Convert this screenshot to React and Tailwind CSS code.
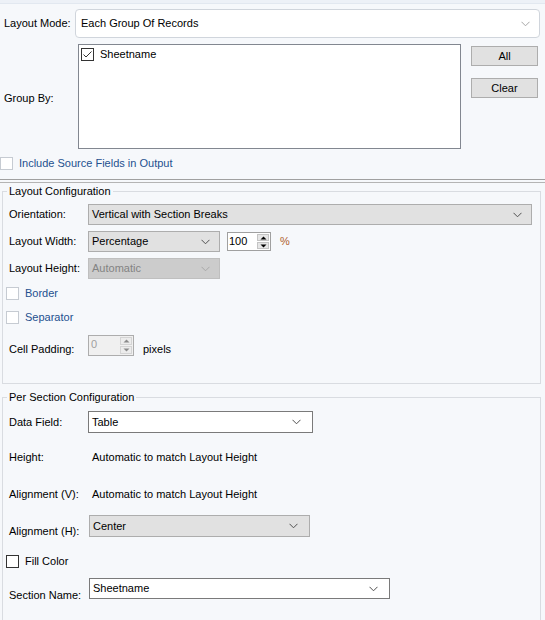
import React from "react";

const FONT = { fontFamily: '"Liberation Sans", Arial, sans-serif' };

function Chevron({ color = "#606060" }) {
  return (
    <svg width="9" height="6" viewBox="0 0 9 6" className="shrink-0">
      <path d="M0.5 0.8 L4.5 4.8 L8.5 0.8" fill="none" stroke={color} strokeWidth="1" />
    </svg>
  );
}

function Combo({ text, w, variant = "gray", h = "h-[21px]", chevronRight = "pr-[9px]" }) {
  const styles = {
    gray: "bg-[#e1e1e1] border-[#adadad] text-black",
    white: "bg-white border-[#7a7a7a] text-black",
    disabled: "bg-[#cccccc] border-[#bfbfbf] text-[#838383]",
  };
  const chev = variant === "disabled" ? "#a8a8a8" : "#505050";
  return (
    <div className={`${w} ${h} ${styles[variant]} border flex items-center justify-between pl-[3px] ${chevronRight}`}>
      <span className="leading-[13px]">{text}</span>
      <Chevron color={chev} />
    </div>
  );
}

function Check({ checked = false, light = false }) {
  return (
    <div
      className={`w-[13px] h-[13px] shrink-0 bg-white border flex items-center justify-center ${
        light ? "border-[#c6cbd2]" : "border-[#333333]"
      }`}
    >
      {checked && (
        <svg width="11" height="11" viewBox="0 0 11 11">
          <path d="M1.5 5.5 L4 8 L9.5 2.5" fill="none" stroke="#333333" strokeWidth="1" />
        </svg>
      )}
    </div>
  );
}

function SpinArrows({ color = "#000000", disabled = false }) {
  const btn = disabled ? "bg-[#ececec] border-[#d4d4d4]" : "bg-[#e6e6e6] border-[#c4c4c4]";
  return (
    <div className="w-[13px] h-full flex flex-col gap-[1px] shrink-0 py-[1px] pr-[1px]">
      <div className={`flex-1 flex items-center justify-center border ${btn}`}>
        <svg width="7" height="4" viewBox="0 0 7 4">
          <path d="M0.5 3.5 L3.5 0.5 L6.5 3.5 Z" fill={color} />
        </svg>
      </div>
      <div className={`flex-1 flex items-center justify-center border ${btn}`}>
        <svg width="7" height="4" viewBox="0 0 7 4">
          <path d="M0.5 0.5 L3.5 3.5 L6.5 0.5 Z" fill={color} />
        </svg>
      </div>
    </div>
  );
}

function Label({ children, w }) {
  return <div className={`${w} shrink-0 leading-[13px]`}>{children}</div>;
}

export default function App() {
  return (
    <div
      className="w-[545px] h-[620px] overflow-hidden bg-[#f6f8fb] text-[11px] text-black leading-[13px]"
      style={FONT}
    >
      <div className="h-[4px] bg-[#edf1f7] border-b border-[#e2e8f0]" />

      {/* Layout Mode */}
      <div className="flex items-center h-[29px] mt-[5px]">
        <div className="w-[75px] pl-[4px] shrink-0">Layout Mode:</div>
        <div className="w-[465px] h-full bg-white border border-[#d0d5dc] rounded-[4px] flex items-center justify-between pl-[5px] pr-[9px]">
          <span>Each Group Of Records</span>
          <Chevron color="#a6a6a6" />
        </div>
      </div>

      {/* Group By */}
      <div className="flex mt-[6px]">
        <div className="w-[78px] shrink-0 pl-[4px] flex items-center pt-[3px]">Group By:</div>
        <div className="w-[383px] h-[105px] bg-white border border-[#828790] pl-[2px] pt-[3px]">
          <div className="flex items-center">
            <Check checked />
            <span className="ml-[6px]">Sheetname</span>
          </div>
        </div>
        <div className="ml-[10px] pt-[2px] flex flex-col gap-[12px]">
          <button className="w-[67px] h-[20px] bg-[#e1e1e1] border border-[#adadad] flex items-center justify-center">
            All
          </button>
          <button className="w-[67px] h-[20px] bg-[#e1e1e1] border border-[#adadad] flex items-center justify-center">
            Clear
          </button>
        </div>
      </div>

      {/* Include Source Fields */}
      <div className="flex items-center mt-[8px] h-[13px]">
        <Check light />
        <span className="ml-[6px] text-[#24508f]">Include Source Fields in Output</span>
      </div>

      {/* double separator */}
      <div className="mt-[9px] h-[4px] border-t border-b border-t-[#a0a0a0] border-b-[#b4b4b4]" />

      {/* Layout Configuration */}
      <fieldset className="ml-[2px] w-[539px] mt-[2px] border border-[#d9dce1] pl-[3px] pb-[27px]">
        <legend className="ml-[1px] px-[2px] leading-[13px]">Layout Configuration</legend>

        <div className="flex items-center mt-[6px] pl-[3px]">
          <Label w="w-[79px]">Orientation:</Label>
          <Combo text="Vertical with Section Breaks" w="w-[444px]" h="h-[21px]" />
        </div>

        <div className="flex items-center mt-[6px] pl-[3px]">
          <Label w="w-[79px]">Layout Width:</Label>
          <Combo text="Percentage" w="w-[132px]" h="h-[21px]" />
          <div className="ml-[7px] w-[44px] h-[19px] bg-white border border-[#a0a0a0] flex items-center">
            <span className="flex-1 pl-[1px]">100</span>
            <SpinArrows />
          </div>
          <span className="ml-[9px] text-[#b0602c]">%</span>
        </div>

        <div className="flex items-center mt-[6px] pl-[3px]">
          <Label w="w-[79px]">Layout Height:</Label>
          <Combo text="Automatic" w="w-[132px]" h="h-[21px]" variant="disabled" />
        </div>

        <div className="flex items-center mt-[8px] h-[13px]">
          <Check light />
          <span className="ml-[6px] text-[#24508f]">Border</span>
        </div>

        <div className="flex items-center mt-[11px] h-[13px]">
          <Check light />
          <span className="ml-[6px] text-[#24508f]">Separator</span>
        </div>

        <div className="flex items-end mt-[11px] pl-[3px]">
          <Label w="w-[79px]">Cell Padding:</Label>
          <div className="w-[46px] h-[21px] bg-[#f0f0f0] border border-[#adadad] flex items-stretch">
            <span className="flex-1 pl-[2px] pt-[2px] text-[#a0a0a0]">0</span>
            <SpinArrows color="#8a8a8a" disabled />
          </div>
          <span className="ml-[9px]">pixels</span>
        </div>
      </fieldset>

      {/* Per Section Configuration */}
      <fieldset className="ml-[2px] w-[539px] mt-[7px] border border-[#d9dce1] pl-[3px] pb-[40px]">
        <legend className="ml-[1px] px-[2px] leading-[13px]">Per Section Configuration</legend>

        <div className="flex items-center mt-[7px] pl-[3px]">
          <Label w="w-[79px]">Data Field:</Label>
          <Combo text="Table" w="w-[225px]" h="h-[22px]" variant="white" chevronRight="pr-[11px]" />
        </div>

        <div className="flex items-center mt-[13px] h-[22px] pl-[3px]">
          <Label w="w-[83px]">Height:</Label>
          <span>Automatic to match Layout Height</span>
        </div>

        <div className="flex items-center mt-[15px] h-[22px] pl-[3px]">
          <Label w="w-[83px]">Alignment (V):</Label>
          <span>Automatic to match Layout Height</span>
        </div>

        <div className="flex items-end mt-[10px] pl-[3px]">
          <div className="w-[80px] shrink-0 leading-[13px] mb-[-1px]">Alignment (H):</div>
          <Combo text="Center" w="w-[221px]" h="h-[22px]" chevronRight="pr-[11px]" />
        </div>

        <div className="flex items-center mt-[18px] h-[13px]">
          <Check />
          <span className="ml-[6px]">Fill Color</span>
        </div>

        <div className="flex items-end mt-[10px] pl-[3px]">
          <div className="w-[80px] shrink-0 leading-[13px] mb-[-3px]">Section Name:</div>
          <Combo text="Sheetname" w="w-[301px]" h="h-[21px]" variant="white" chevronRight="pr-[11px]" />
        </div>
      </fieldset>
    </div>
  );
}
